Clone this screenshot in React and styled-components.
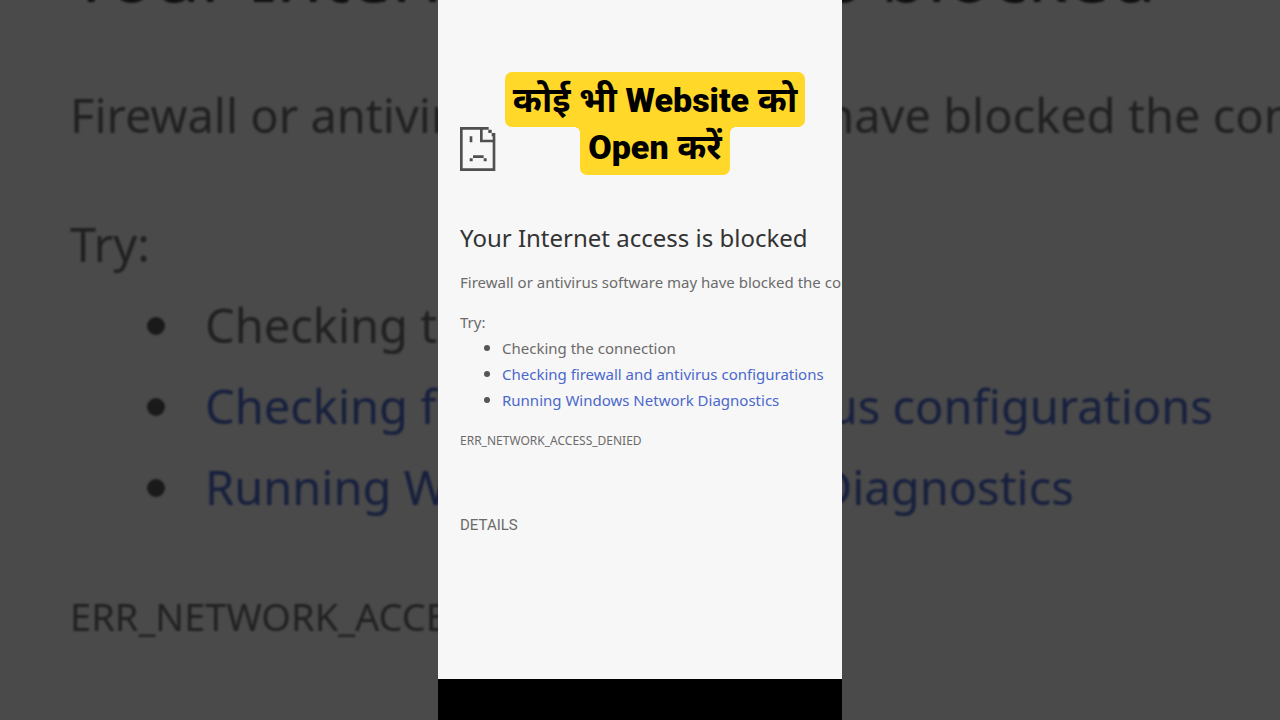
import React from "react";
import styled, { createGlobalStyle, css } from "styled-components";

const GlobalStyle = createGlobalStyle`
  * { box-sizing: border-box; }
  body { margin: 0; background: #4a4a4a; }
`;

const compact = {
  inset: 22, heading: 24, headingLine: 34, text: 15, line: 25, item: 26,
  code: 12, gap: 15, indent: 42, bullet: 6, bulletGap: 12,
};

const enlarged = {
  inset: 70, heading: 75, headingLine: 107, text: 47, line: 81, item: 81,
  code: 38, gap: 48, indent: 135, bullet: 18, bulletGap: 40,
};

const Stage = styled.main`
  position: relative;
  display: flex;
  justify-content: center;
  min-height: 100vh;
  overflow: hidden;
  font-family: "Noto Sans", "Open Sans", sans-serif;
`;

const Backdrop = styled.div`
  position: absolute;
  inset: 0;
  overflow: hidden;
  background: #4a4a4a;
`;

const BackdropPage = styled.div`
  margin-top: -80px;
  background: #f7f7f7;
  filter: blur(1px) brightness(0.3);
`;

const Phone = styled.section`
  position: relative;
  display: flex;
  flex-direction: column;
  height: 100vh;
  aspect-ratio: 101 / 180;
  overflow: hidden;
  background: #f7f7f7;
`;

const PhonePage = styled.div`
  flex: 1;
  padding-top: 127px;
`;

const BottomBar = styled.div`
  height: 41px;
  background: #000;
`;

const PageIcon = styled.svg`
  display: block;
  width: 36px;
  height: 44px;
  margin: 0 0 50px 22px;
`;

const Message = styled.div`
  padding-left: ${(p) => p.$m.inset}px;
  color: #6b6b6b;
  white-space: nowrap;
  font-size: ${(p) => p.$m.text}px;
  line-height: ${(p) => p.$m.line}px;
`;

const Heading = styled.h1`
  margin: 0;
  color: #333;
  font-weight: 400;
  font-size: ${(p) => p.$m.heading}px;
  line-height: ${(p) => p.$m.headingLine}px;
`;

const Paragraph = styled.p`
  margin: ${(p) => p.$m.gap}px 0 0;
`;

const ErrorCode = styled(Paragraph)`
  font-size: ${(p) => p.$m.code}px;
`;

const Suggestions = styled.ul`
  margin: 0;
  padding: 0;
  list-style: none;
`;

const Suggestion = styled.li`
  display: flex;
  align-items: center;
  line-height: ${(p) => p.$m.item}px;

  &::before {
    content: "";
    width: ${(p) => p.$m.bullet}px;
    height: ${(p) => p.$m.bullet}px;
    margin-left: ${(p) => p.$m.indent - p.$m.bullet - p.$m.bulletGap}px;
    margin-right: ${(p) => p.$m.bulletGap}px;
    border-radius: 50%;
    background: #555;
  }
`;

const Link = styled.a`
  color: #4a68cc;
  text-decoration: none;
`;

const DetailsButton = styled.button`
  display: block;
  margin: 60px 0 0 22px;
  padding: 0;
  border: 0;
  background: none;
  color: #6b6b6b;
  font-family: Roboto, sans-serif;
  font-size: 15px;
  line-height: 25px;
`;

const Caption = styled.div`
  position: absolute;
  top: 72px;
  left: 68px;
  right: 38px;
  display: flex;
  flex-direction: column;
  align-items: center;
  color: #000;
  font-family: Roboto, "Noto Sans Devanagari", sans-serif;
  font-size: 35px;
  font-weight: 700;
  white-space: nowrap;
`;

const Latin = styled.strong`
  font-weight: 900;
  font-size: 34px;
  line-height: 1;
`;

const corner = css`
  content: "";
  position: absolute;
  top: 0;
  width: 6px;
  height: 6px;
`;

const CaptionLine = styled.span`
  position: relative;
  height: 55px;
  padding: 3px 8px 0;
  border-radius: 7px;
  background: #ffd82a;
  line-height: 52px;

  ${(p) => p.$last && css`
    height: 48px;
    padding-top: 0;
    border-radius: 0 0 7px 7px;
    line-height: 42px;

    &::before {
      ${corner}
      right: 100%;
      background: radial-gradient(circle at 0 100%, transparent 6px, #ffd82a 6px);
    }
    &::after {
      ${corner}
      left: 100%;
      background: radial-gradient(circle at 100% 100%, transparent 6px, #ffd82a 6px);
    }
  `}
`;

function SadPage() {
  return (
    <PageIcon viewBox="0 0 108 132" fill="#505050" aria-hidden="true">
      <path d="M0 0H86V8H68V38H106V132H0ZM8 8V124H98V46H60V8Z" fillRule="evenodd" />
      <path d="M85 8h10v10h-10zM95 18h11v22h-8V28h-3z" />
      <path d="M29 28h8v18h-8zM39 85h32v8H39zM29 94h9v9h-9zM71 94h9v9h-9z" />
    </PageIcon>
  );
}

function ErrorMessage({ metrics: m }) {
  return (
    <Message $m={m}>
      <Heading $m={m}>Your Internet access is blocked</Heading>
      <Paragraph $m={m}>Firewall or antivirus software may have blocked the connection.</Paragraph>
      <Paragraph $m={m}>Try:</Paragraph>
      <Suggestions>
        <Suggestion $m={m}>Checking the connection</Suggestion>
        <Suggestion $m={m}><Link href="#firewall">Checking firewall and antivirus configurations</Link></Suggestion>
        <Suggestion $m={m}><Link href="#diagnostics">Running Windows Network Diagnostics</Link></Suggestion>
      </Suggestions>
      <ErrorCode $m={m}>ERR_NETWORK_ACCESS_DENIED</ErrorCode>
    </Message>
  );
}

export default function App() {
  return (
    <Stage>
      <GlobalStyle />
      <Backdrop aria-hidden="true" inert>
        <BackdropPage>
          <ErrorMessage metrics={enlarged} />
        </BackdropPage>
      </Backdrop>
      <Phone>
        <PhonePage>
          <SadPage />
          <ErrorMessage metrics={compact} />
          <DetailsButton type="button">DETAILS</DetailsButton>
        </PhonePage>
        <BottomBar />
        <Caption>
          <CaptionLine>कोई भी <Latin>Website</Latin> को</CaptionLine>
          <CaptionLine $last><Latin>Open</Latin> करें</CaptionLine>
        </Caption>
      </Phone>
    </Stage>
  );
}
